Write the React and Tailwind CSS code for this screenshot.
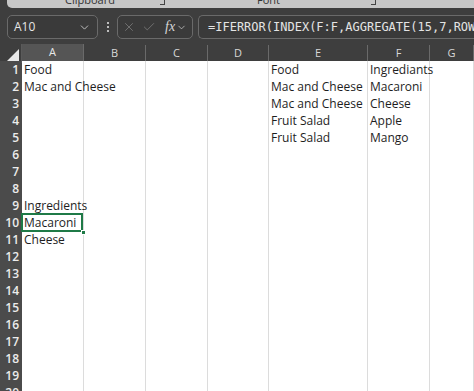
import { ChevronDown, X, Check } from 'lucide-react';

const COLS = ['A', 'B', 'C', 'D', 'E', 'F', 'G'];

const CELLS = {
  'A1': 'Food',
  'A2': 'Mac and Cheese',
  'A9': 'Ingredients',
  'A10': 'Macaroni',
  'A11': 'Cheese',
  'E1': 'Food',
  'F1': 'Ingrediants',
  'E2': 'Mac and Cheese',
  'F2': 'Macaroni',
  'E3': 'Mac and Cheese',
  'F3': 'Cheese',
  'E4': 'Fruit Salad',
  'F4': 'Apple',
  'E5': 'Fruit Salad',
  'F5': 'Mango',
};

const GRID = 'grid grid-cols-[22px_62px_62px_62px_61px_99px_62px_1fr] shrink-0';

function Ribbon() {
  return (
    <div className="h-[12px] shrink-0 bg-[#3e3e3e] flex">
      <div className="ml-[7px] flex-1 h-[8px] bg-[#c7c7c7] rounded-bl-[5px] relative overflow-hidden text-[11px] leading-none text-[#333] font-['Open_Sans',sans-serif]">
        <span className="absolute left-[58px] top-[-6px]">Clipboard</span>
        <span className="absolute left-[153px] top-[0px] w-[5px] h-[5px] border-r border-b border-[#444]" />
        <span className="absolute left-[250px] top-[-6px]">Font</span>
        <span className="absolute left-[364px] top-[0px] w-[5px] h-[5px] border-r border-b border-[#444]" />
      </div>
    </div>
  );
}

function FormulaBar() {
  return (
    <div className="h-[32px] shrink-0 bg-[#3e3e3e] flex items-start pt-[3px] pl-[7px] overflow-hidden">
      {/* Name box */}
      <div className="w-[91px] h-[24px] shrink-0 rounded-[5px] border border-[#6a6a6a] bg-[#3a3a3a] flex items-center justify-between pl-[6px] pr-[6px]">
        <span className="text-[12px] text-[#e6e6e6] font-['Open_Sans',sans-serif]">A10</span>
        <ChevronDown size={13} strokeWidth={1.6} className="text-[#cfcfcf]" />
      </div>
      {/* Dots */}
      <div className="w-[19px] h-[24px] shrink-0 flex flex-col items-center justify-center gap-[2px]">
        <span className="w-[2px] h-[2px] bg-[#bdbdbd]" />
        <span className="w-[2px] h-[2px] bg-[#bdbdbd]" />
        <span className="w-[2px] h-[2px] bg-[#bdbdbd]" />
      </div>
      {/* Function buttons */}
      <div className="w-[76px] h-[24px] shrink-0 rounded-[5px] border border-[#6a6a6a] bg-[#3a3a3a] flex items-center pl-[4px]">
        <X size={14} strokeWidth={1.3} className="text-[#808080]" />
        <Check size={14} strokeWidth={1.3} className="text-[#808080] ml-[6px]" />
        <span className="ml-[9px] text-[14px] italic text-[#d6d6d6] font-['Liberation_Serif',serif] leading-none">fx</span>
        <ChevronDown size={11} strokeWidth={1.6} className="text-[#cfcfcf] ml-[1px]" />
      </div>
      {/* Formula */}
      <div className="ml-[5px] flex-1 h-[24px] rounded-l-[5px] border border-r-0 border-[#6a6a6a] bg-[#3a3a3a] flex items-center pl-[9px] overflow-hidden whitespace-nowrap">
        <span className="text-[12px] text-[#e4e4e4] font-['DejaVu_Sans_Mono',monospace]">=IFERROR(INDEX(F:F,AGGREGATE(15,7,ROW</span>
        <span className="w-[4px] h-[13px] bg-[#4a7fd0] shrink-0" />
      </div>
    </div>
  );
}

function HeaderRow() {
  return (
    <div className={`${GRID} h-[17px] bg-[#3e3e3e]`}>
      <div className="relative border-r border-[#5a5a5a]">
        <span className="absolute right-[2px] bottom-[2px] w-0 h-0 border-l-[12px] border-l-transparent border-b-[12px] border-b-[#e8e8e8]" />
      </div>
      {COLS.map((c) => (
        <div
          key={c}
          className={
            c === 'A'
              ? 'bg-[#555555] border-b-2 border-[#2e8a56] border-r border-r-[#6a6a6a] flex items-center justify-center text-[11px] text-[#e8e8e8] font-["Open_Sans",sans-serif]'
              : 'border-r border-[#6a6a6a] my-[1px] flex items-center justify-center text-[11px] text-[#d8d8d8] font-["Open_Sans",sans-serif]'
          }
        >
          {c}
        </div>
      ))}
    </div>
  );
}

function Row({ n }) {
  return (
    <div className={`${GRID} h-[17px]`}>
      <div className="bg-[#4b4b4b] border-b border-[#2e2e2e] flex items-center justify-end pr-[3px] text-[12px] font-semibold text-[#ececec] font-['Open_Sans',sans-serif]">
        {n}
      </div>
      {COLS.map((c) => {
        const id = `${c}${n}`;
        const value = CELLS[id];
        const selected = id === 'A10';
        return (
          <div
            key={c}
            className="relative bg-white border-r border-b border-[#dcdcdc] overflow-visible whitespace-nowrap"
          >
            {value && (
              <span className="absolute left-[2px] top-[0px] text-[12px] leading-[17px] text-[#1e1e1e] font-['Open_Sans',sans-serif] z-10">
                {value}
              </span>
            )}
            {selected && (
              <>
                <span className="absolute -left-[1px] -top-[1px] right-0 bottom-0 border-2 border-[#1f7a47] z-20" />
                <span className="absolute -right-[3px] -bottom-[3px] w-[5px] h-[5px] bg-[#1f7a47] border border-white z-30" />
              </>
            )}
          </div>
        );
      })}
    </div>
  );
}

export default function App() {
  const rows = Array.from({ length: 20 }, (_, i) => i + 1);
  return (
    <div className="w-[474px] h-[391px] overflow-hidden bg-[#3e3e3e] flex flex-col">
      <Ribbon />
      <FormulaBar />
      <HeaderRow />
      <div className="flex flex-col shrink-0">
        {rows.map((n) => (
          <Row key={n} n={n} />
        ))}
      </div>
    </div>
  );
}
